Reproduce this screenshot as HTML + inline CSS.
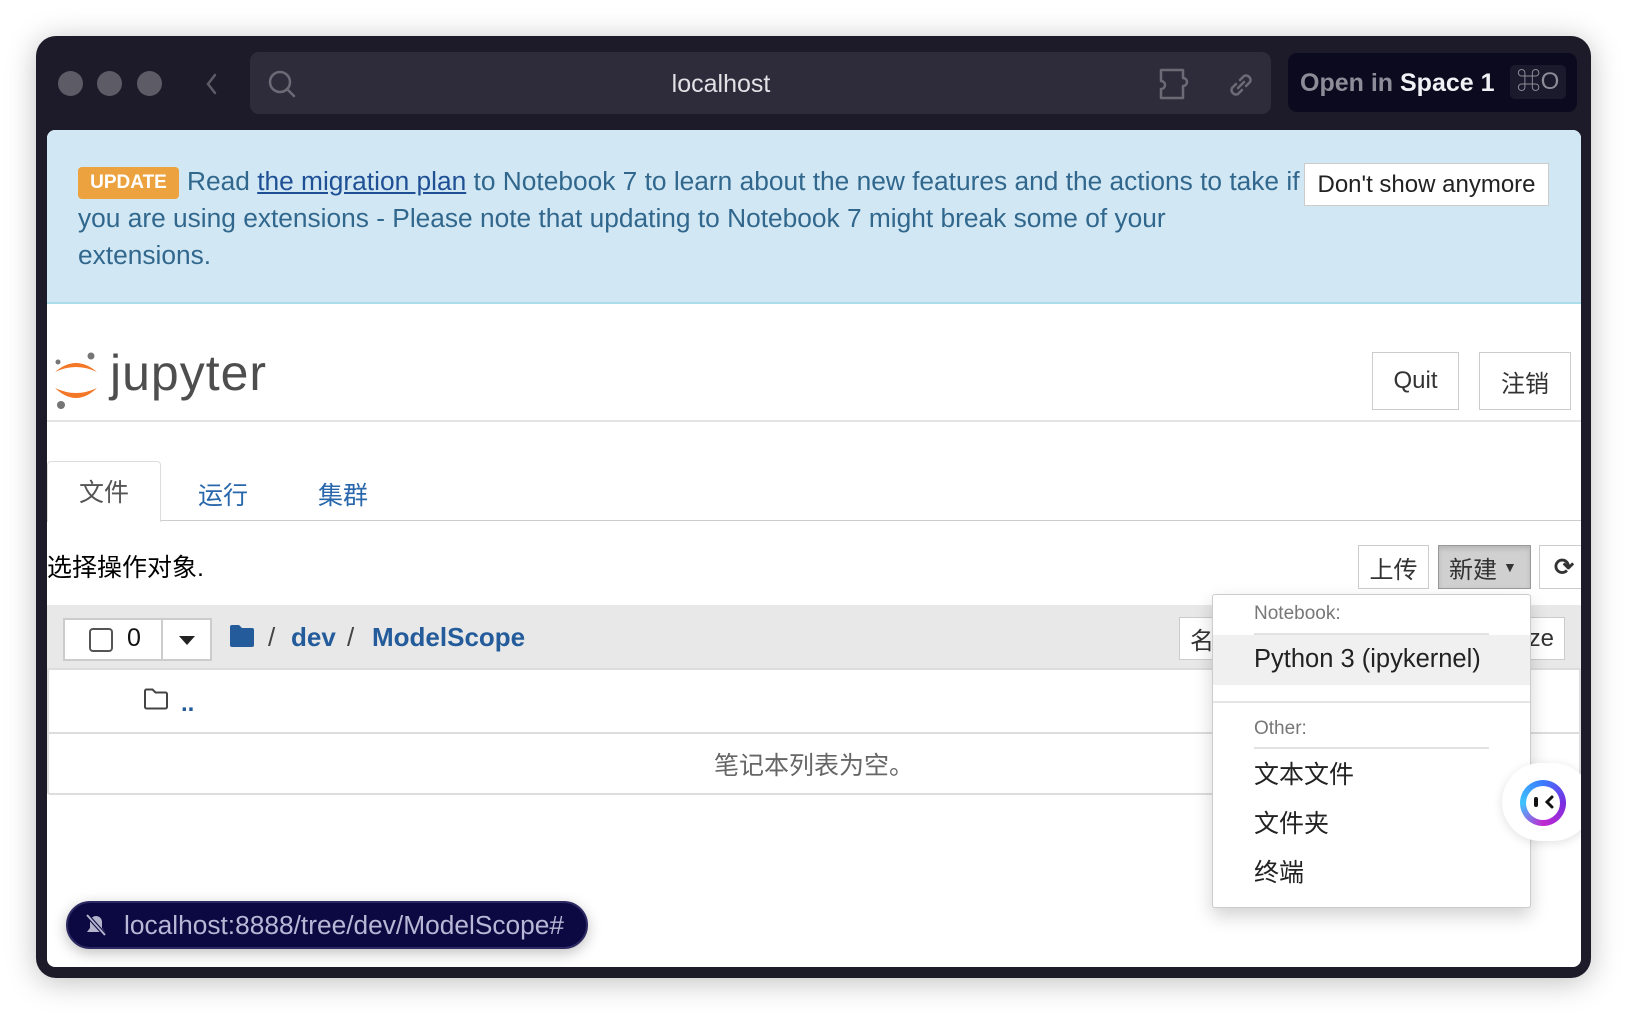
<!DOCTYPE html>
<html><head><meta charset="utf-8"><style>
*{margin:0;padding:0;box-sizing:border-box}
body{width:1628px;height:1014px;background:#fff;position:relative;overflow:hidden;font-family:"Liberation Sans","Noto Sans CJK SC",sans-serif}
.a{position:absolute}
.win{left:36px;top:36px;width:1555px;height:942px;background:#1d1b29;border-radius:20px;box-shadow:0 4px 30px rgba(0,0,0,.25)}
.content{left:47px;top:130px;width:1534px;height:837px;background:#fff;border-radius:8px;overflow:hidden}
.dot{width:25px;height:25px;border-radius:50%;background:#5c5b66;top:71px}
.btn{border:1px solid #ccc;background:#fff;color:#333;display:flex;align-items:center;justify-content:center}
.cjk{font-family:"Liberation Sans","Noto Sans CJK SC",sans-serif}
</style></head><body>
<div class="a win"></div>
<div class="a dot" style="left:58px"></div>
<div class="a dot" style="left:97px"></div>
<div class="a dot" style="left:137px"></div>
<svg class="a" style="left:203px;top:72px" width="16" height="24"><path d="M12 3 L5 12 L12 21" stroke="#5c5b66" stroke-width="2.5" fill="none" stroke-linecap="round"/></svg>
<div class="a" style="left:250px;top:52px;width:1021px;height:62px;background:#2e2c3b;border-radius:9px"></div>
<svg class="a" style="left:266px;top:68px" width="32" height="32"><circle cx="14" cy="14" r="10" stroke="#6b6a75" stroke-width="2.5" fill="none"/><path d="M21 21 L28 28" stroke="#6b6a75" stroke-width="2.5" stroke-linecap="round"/></svg>
<div class="a" style="left:620px;top:70px;width:202px;text-align:center;color:#e2e2e6;font-size:25px">localhost</div>
<svg class="a" style="left:1158px;top:66px" width="44" height="36"><path d="M3 4h22v8a4 4 0 1 1 0 8v12H3v-9a4 4 0 1 0 0-8z" stroke="#6b6a75" stroke-width="2.5" fill="none" stroke-linejoin="round"/></svg>
<svg class="a" style="left:1224px;top:68px" width="34" height="34"><path d="M14 20l6-6M12 16l-4 4a4.5 4.5 0 0 0 6 6l4-4M22 18l4-4a4.5 4.5 0 0 0-6-6l-4 4" stroke="#6b6a75" stroke-width="2.5" fill="none" stroke-linecap="round"/></svg>
<div class="a" style="left:1288px;top:53px;width:289px;height:59px;background:#0b0a1e;border-radius:9px"></div>
<div class="a" style="left:1300px;top:69px;font-size:25px;color:#8d8c98;white-space:nowrap;font-weight:bold">Open in <span style="color:#f2f2f6">Space 1</span></div>
<div class="a" style="left:1510px;top:65px;width:56px;height:34px;background:#1b1a2c;border-radius:5px;color:#8d8c98;font-size:24px;text-align:center;line-height:34px">⌘O</div>

<div class="a content">
  <div class="a" style="left:0;top:0;width:1534px;height:174px;background:#d1e8f4;border-bottom:2px solid #a9dde9"></div>
  <div class="a" style="left:31px;top:37px;width:101px;height:32px;background:#eca23f;border-radius:4px;color:#fff;font-weight:bold;font-size:19px;line-height:32px;text-align:center">UPDATE</div>
  <div class="a" style="left:31px;top:33px;width:1280px;font-size:26.3px;line-height:37px;color:#31678d;text-indent:109px;white-space:nowrap">Read <u style="color:#1f4f95">the migration plan</u> to Notebook 7 to learn about the new features and the actions to take if<br><span style="display:inline-block;text-indent:0">you are using extensions - Please note that updating to Notebook 7 might break some of your<br>extensions.</span></div>
  <div class="a btn" style="left:1257px;top:33px;width:245px;height:43px;font-size:24px;color:#222">Don't show anymore</div>

  <svg class="a" style="left:6px;top:222px" width="46" height="58"><circle cx="38" cy="4" r="3.5" fill="#767677"/><circle cx="5" cy="10" r="2.5" fill="#767677"/><circle cx="8" cy="53" r="4" fill="#767677"/><path d="M2 20 Q23 2 44 20 Q23 10 2 20z" fill="#f37726"/><path d="M2 36 Q23 56 44 36 Q23 46 2 36z" fill="#f37726"/></svg>
  <div class="a" style="left:63px;top:214px;font-size:50px;color:#4e4e4e;letter-spacing:1px">jupyter</div>
  <div class="a btn" style="left:1325px;top:222px;width:87px;height:58px;font-size:24px">Quit</div>
  <div class="a btn cjk" style="left:1432px;top:222px;width:92px;height:58px;font-size:24px">注销</div>
  <div class="a" style="left:0;top:290px;width:1534px;height:2px;background:#e4e4e4"></div>

  <div class="a" style="left:0;top:390px;width:1534px;height:1px;background:#ccc"></div>
  <div class="a cjk" style="left:0;top:331px;width:114px;height:61px;background:#fff;border:1px solid #ddd;border-bottom:none;border-radius:4px 4px 0 0;font-size:25px;color:#555;text-align:center;line-height:62px">文件</div>
  <div class="a cjk" style="left:151px;top:346px;font-size:25px;color:#2867ab">运行</div>
  <div class="a cjk" style="left:271px;top:346px;font-size:25px;color:#2867ab">集群</div>

  <div class="a cjk" style="left:0;top:418px;font-size:25px;color:#000">选择操作对象.</div>
  <div class="a btn cjk" style="left:1311px;top:415px;width:71px;height:44px;font-size:24px">上传</div>
  <div class="a btn cjk" style="left:1391px;top:415px;width:93px;height:44px;font-size:24px;background:#d0d0d0;border-color:#999;box-shadow:inset 0 3px 5px rgba(0,0,0,.12);justify-content:flex-start;padding-left:10px">新建<span style="font-size:14px;margin-left:6px">▼</span></div>
  <div class="a btn" style="left:1492px;top:415px;width:50px;height:44px;font-size:24px;font-weight:bold">⟳</div>

  <div class="a" style="left:0;top:475px;width:1534px;height:190px;border:2px solid #ddd;border-radius:3px"></div>
  <div class="a" style="left:0;top:475px;width:1534px;height:65px;background:#e8e8e8;border-bottom:2px solid #ddd"></div>
  <div class="a" style="left:16px;top:488px;width:149px;height:43px;background:#fff;border:2px solid #ccc"></div>
  <div class="a" style="left:114px;top:488px;width:2px;height:43px;background:#ccc"></div>
  <div class="a" style="left:42px;top:498px;width:24px;height:24px;border:2px solid #555;border-radius:4px"></div>
  <div class="a" style="left:80px;top:494px;font-size:25px;color:#111">0</div>
  <svg class="a" style="left:131px;top:504px" width="18" height="12"><path d="M1 2h16l-8 9z" fill="#222"/></svg>
  <svg class="a" style="left:182px;top:494px" width="26" height="24"><path d="M1 3a2 2 0 0 1 2-2h7l3 3h10a2 2 0 0 1 2 2v15a2 2 0 0 1-2 2H3a2 2 0 0 1-2-2z" fill="#245c9b"/></svg>
  <div class="a" style="left:0;top:492px;font-size:26px;white-space:nowrap"><span class="a" style="left:221px;color:#444">/</span><span class="a" style="left:244px;color:#245c9b;font-weight:bold">dev</span><span class="a" style="left:300px;color:#444">/</span><span class="a" style="left:325px;color:#245c9b;font-weight:bold">ModelScope</span></div>
  <div class="a btn cjk" style="left:1132px;top:487px;width:50px;height:43px;font-size:24px;justify-content:flex-start;padding-left:10px">名</div>
  <div class="a btn" style="left:1450px;top:487px;width:68px;height:43px;font-size:24px;justify-content:flex-end;padding-right:10px">ze</div>

  <svg class="a" style="left:96px;top:557px" width="26" height="24"><path d="M2 4a1.5 1.5 0 0 1 1.5-1.5h6l3 3h10a1.5 1.5 0 0 1 1.5 1.5v13a1.5 1.5 0 0 1-1.5 1.5H3.5A1.5 1.5 0 0 1 2 20z" stroke="#444" stroke-width="2" fill="none"/></svg>
  <div class="a" style="left:134px;top:560px;font-size:24px;color:#245c9b;font-weight:bold">..</div>
  <div class="a" style="left:0;top:602px;width:1534px;height:2px;background:#ddd"></div>
  <div class="a cjk" style="left:0;top:616px;width:1534px;text-align:center;font-size:25px;color:#666">笔记本列表为空。</div>

  <div class="a" style="left:1165px;top:464px;width:319px;height:314px;background:#fff;border:1px solid #ccc;border-radius:3px;box-shadow:0 8px 18px rgba(0,0,0,.18)"></div>
  <div class="a" style="left:1207px;top:473px;font-size:19px;color:#777">Notebook:</div>
  <div class="a" style="left:1207px;top:503px;width:235px;height:2px;background:#e2e2e2"></div>
  <div class="a" style="left:1166px;top:505px;width:317px;height:50px;background:#f0f0f0"></div>
  <div class="a" style="left:1207px;top:515px;font-size:25.5px;color:#222">Python 3 (ipykernel)</div>
  <div class="a" style="left:1166px;top:571px;width:317px;height:2px;background:#e5e5e5"></div>
  <div class="a" style="left:1207px;top:588px;font-size:19px;color:#777">Other:</div>
  <div class="a" style="left:1207px;top:617px;width:235px;height:2px;background:#e2e2e2"></div>
  <div class="a cjk" style="left:1207px;top:621px;font-size:25px;color:#222;line-height:49px">文本文件<br>文件夹<br>终端</div>

  <div class="a" style="left:1455px;top:633px;width:90px;height:78px;background:#fff;border-radius:39px;box-shadow:0 2px 10px rgba(0,0,0,.12)"></div>
  <div class="a" style="left:1473px;top:650px;width:46px;height:46px;border-radius:50%;background:conic-gradient(#3a7bff,#7a2de0,#c02ad0,#3dc4ff,#3a7bff)"></div>
  <div class="a" style="left:1479px;top:656px;width:34px;height:34px;border-radius:50%;background:#fff"></div>
  <div class="a" style="left:1487px;top:667px;width:4px;height:10px;background:#111;border-radius:2px"></div>
  <svg class="a" style="left:1496px;top:664px" width="12" height="16"><path d="M9 3 L4 8 L9 13" stroke="#111" stroke-width="3" fill="none" stroke-linecap="round"/></svg>

  <div class="a" style="left:19px;top:771px;width:522px;height:48px;background:#0c0942;border:2px solid #2d2a63;border-radius:24px;box-shadow:0 4px 14px rgba(0,0,0,.25)"></div>
  <svg class="a" style="left:38px;top:783px" width="22" height="24"><path d="M5 9a6 6 0 0 1 12 0v6l3 4H2l3-4z" fill="#b4b3cc"/><path d="M2 2 L20 22" stroke="#0c0942" stroke-width="4"/><path d="M2 2 L20 22" stroke="#b4b3cc" stroke-width="2"/></svg>
  <div class="a" style="left:77px;top:780px;font-size:26.3px;color:#b8b7d6;white-space:nowrap">localhost:8888/tree/dev/ModelScope#</div>
</div>
</body></html>
